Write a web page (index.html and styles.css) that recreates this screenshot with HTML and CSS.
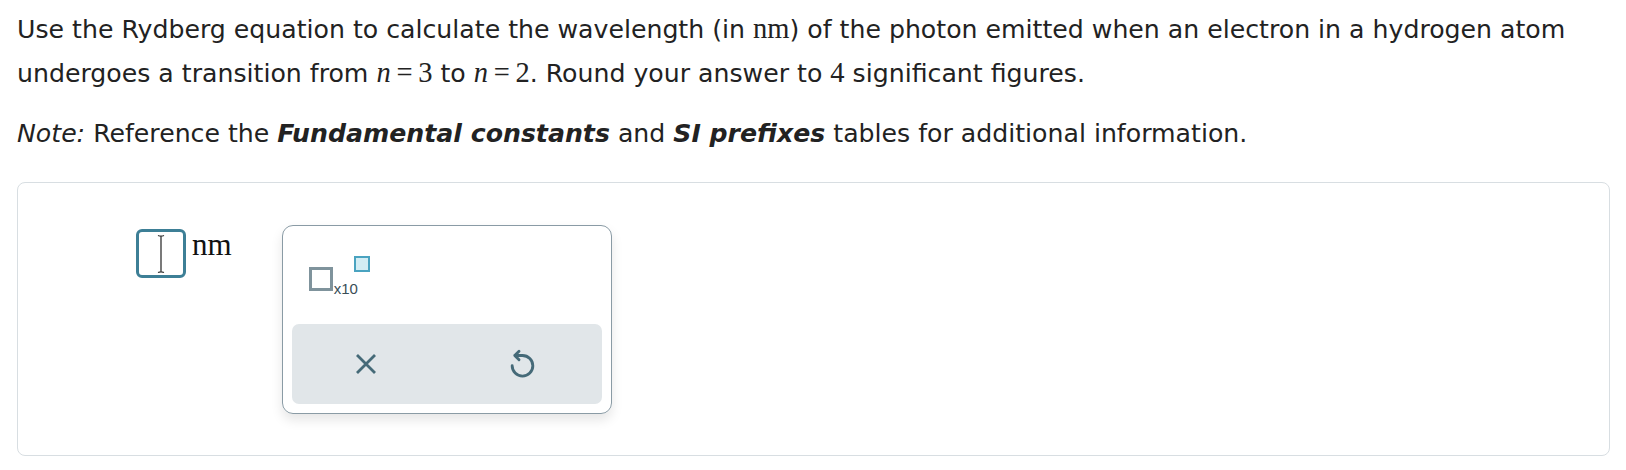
FILE: index.html
```html
<!DOCTYPE html>
<html>
<head>
<meta charset="utf-8">
<link rel="stylesheet" href="styles.css">
</head>
<body>
<div class="page">
  <p class="q">Use the Rydberg equation to calculate the wavelength (in <span class="m">nm</span>) of the photon emitted when an electron in a hydrogen atom undergoes a transition from <span class="m"><i>n</i>&thinsp;=&thinsp;3</span> to <span class="m"><i>n</i>&thinsp;=&thinsp;2</span>. Round your answer to <span class="m">4</span> significant figures.</p>
  <p class="note"><i>Note:</i> Reference the <b><i>Fundamental constants</i></b> and <b><i>SI prefixes</i></b> tables for additional information.</p>
  <div class="answer">
    <div class="field">
      <div class="inbox">
        <svg width="10" height="40" viewBox="0 0 10 40"><path d="M2 1.5 Q5 2.8 8 1.5 M5 2.2 V37.8 M2 38.5 Q5 37.2 8 38.5" fill="none" stroke="#333" stroke-width="1.3"/></svg>
      </div>
      <span class="unit">nm</span>
    </div>
    <div class="popup">
      <div class="sci">
        <span class="base"></span><span class="x10">x10</span><span class="exp"></span>
      </div>
      <div class="actions">
        <svg class="ico" width="22" height="22" viewBox="0 0 22 22"><path d="M2 2 L20 20 M20 2 L2 20" stroke="#456a78" stroke-width="2.8" fill="none"/></svg>
        <svg class="ico" width="31" height="31" viewBox="0 0 24 24"><path d="M12 5 A8 8 0 1 1 4 13 M12 5 H6 M9.3 1.7 L6 5 L9.3 8.3" stroke="#456a78" stroke-width="2.2" fill="none" stroke-linecap="round" stroke-linejoin="round"/></svg>
      </div>
    </div>
  </div>
</div>
</body>
</html>
```
FILE: styles.css
```css
html, body { margin: 0; padding: 0; background: #fff; }
.page { padding: 0 16px 0 17px; font-family: "DejaVu Sans", Verdana, sans-serif; color: #222; font-size: 25.2px; }
.q { margin: 0; padding-top: 8px; line-height: 44px; }
.note { margin: 16px 0 0; line-height: 44px; }
.m { font-family: "Liberation Serif", "Times New Roman", serif; font-size: 28.5px; line-height: 1; }
.m i { font-style: italic; }
.answer { margin-top: 26px; border: 1px solid #d8dee2; border-radius: 8px; height: 274px; display: flex; align-items: flex-start; padding: 42px 0 0 118px; box-sizing: border-box; }
.field { display: flex; align-items: flex-start; gap: 6px; margin-top: 4px; }
.inbox { width: 44px; height: 43px; border: 3px solid #3d7f96; border-radius: 6px; display: flex; align-items: center; justify-content: center; }
.unit { font-family: "Liberation Serif", "Times New Roman", serif; font-size: 31px; line-height: 31px; margin-top: 0; color: #111; }
.popup { margin-left: 50px; width: 330px; height: 189px; border: 1px solid #8a9ba5; border-radius: 11px; box-sizing: border-box; box-shadow: 0 6px 12px rgba(0,0,0,0.10); display: flex; flex-direction: column; padding: 0 9px 9px; }
.sci { height: 98px; display: flex; align-items: flex-start; padding: 29px 0 0 17px; box-sizing: border-box; }
.base { width: 18px; height: 18px; border: 3px solid #7f939c; margin-top: 12px; }
.x10 { font-family: "Liberation Sans", Arial, sans-serif; font-size: 15px; color: #3a4e57; margin-top: 25px; margin-left: 1px; }
.exp { width: 12px; height: 12px; border: 2.5px solid #4aa3c0; background: #d3edf4; margin-left: -4px; margin-top: 1px; }
.actions { flex: 1; background: #e1e6e9; border-radius: 7px; display: flex; align-items: center; padding: 0 0 0 63px; gap: 130px; }
.ico { display: block; }
```
